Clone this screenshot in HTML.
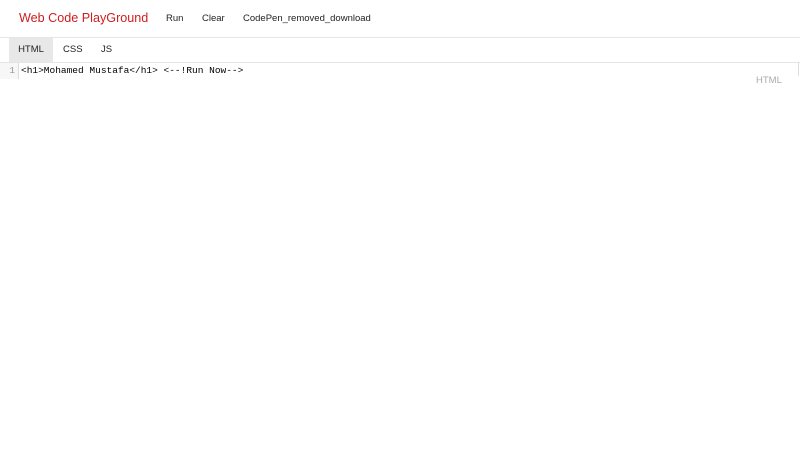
<!DOCTYPE html>
<html><head><style>
body{margin:0;width:800px;height:450px;background:#fff;font-family:"Liberation Sans",sans-serif;position:relative;overflow:hidden}
.nav{height:37px;border-bottom:1px solid #e5e5e5;position:relative}
.nav span{position:absolute;top:13px;font-size:9.5px;color:#222}
.brand{left:19px;top:11px!important;font-size:12.6px!important;color:#d01c1f!important}
.tabs{height:24px;border-bottom:1px solid #e5e5e5;position:relative}
.tabs span{position:absolute;top:0;height:24px;line-height:24px;font-size:9.5px;color:#222}
.code{position:absolute;top:63px;left:0;right:0;height:16px;font-family:"Liberation Mono",monospace;font-size:9.5px;line-height:16px}
.gut{position:absolute;left:0;width:15px;padding-right:3px;text-align:right;color:#999;background:#f7f7f7;border-right:1px solid #ddd;height:16px}
.txt{position:absolute;left:21px;color:#000;white-space:pre}
.lbl{position:absolute;top:75px;left:756px;font-size:9.5px;color:#aaa}
.rb{position:absolute;left:798px;top:62px;width:1px;height:14px;background:#ddd}
</style></head><body>
<div class="nav"><span class="brand">Web Code PlayGround</span><span style="left:166px">Run</span><span style="left:202px">Clear</span><span style="left:243px">CodePen_removed_download</span></div>
<div class="tabs"><span style="left:9px;width:44px;background:#e8e8e8;text-align:center">HTML</span><span style="left:63px">CSS</span><span style="left:101px">JS</span></div>
<div class="code"><div class="gut">1</div><div class="txt">&lt;h1&gt;Mohamed Mustafa&lt;/h1&gt; &lt;--!Run Now--&gt;</div></div>
<div class="lbl">HTML</div><div class="rb"></div>
</body></html>
